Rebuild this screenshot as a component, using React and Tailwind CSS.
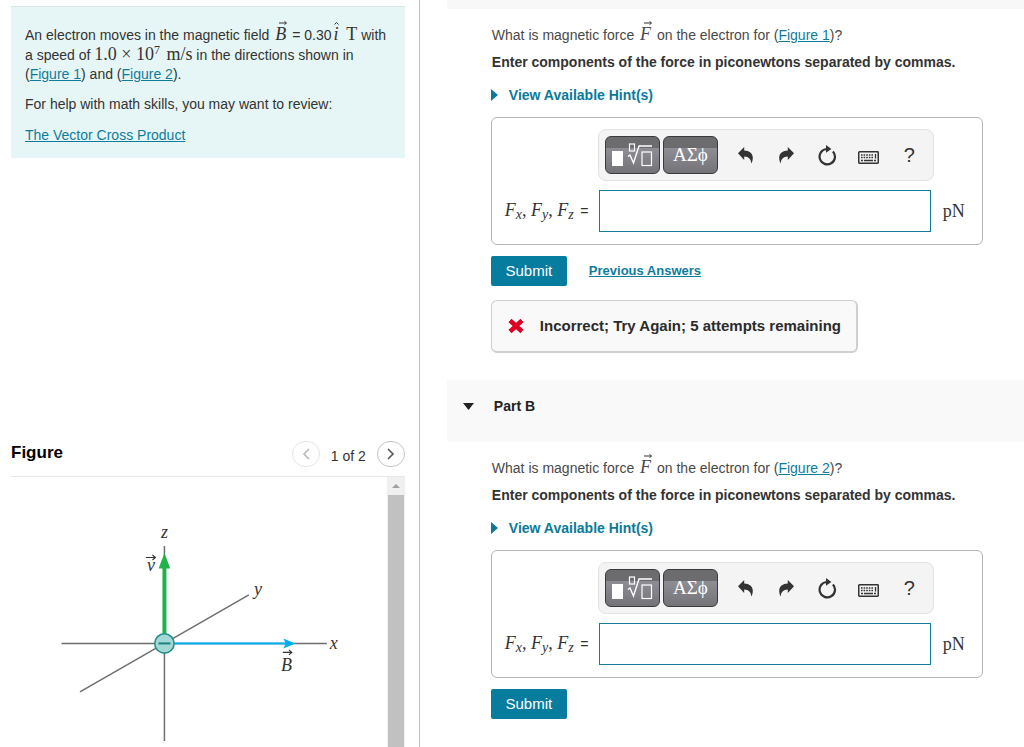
import React from 'react'

const sans = "font-['Liberation_Sans',Arial,sans-serif]"
const serif = "font-['Liberation_Serif','Times_New_Roman',serif]"

function VectorSymbol({ children, accent = 'arrow' }) {
  return (
    <span className={`${serif} relative mx-0.5 inline-block text-lg leading-none italic`}>
      {children}
      <svg className="absolute -top-1 left-1 h-1.5 w-2 overflow-visible" viewBox="0 0 8 6" aria-hidden="true">
        {accent === 'arrow' ? (
          <path d="M0 2h7M5.500 .4 7.600 2 5.500 3.600" fill="none" stroke="#333" strokeWidth="1" />
        ) : (
          <path d="M-2.500 3.500 -.5 1.500 1.500 3.500" fill="none" stroke="#333" strokeWidth="1" />
        )}
      </svg>
    </span>
  )
}

function Link({ children }) {
  return (
    <a href="#figure" className="text-[#0f7c9c] underline">
      {children}
    </a>
  )
}

function TemplateIcon() {
  return (
    <svg width="42" height="24" viewBox="0 0 42 24" fill="none" stroke="#fff" aria-hidden="true">
      <rect x="1" y="8" width="11" height="15" fill="#fff" stroke="none" />
      <rect x="18.500" y="1" width="5" height="7" strokeWidth="1.200" />
      <path d="M17 13.500 19 12l3.500 8L28 3h13" strokeWidth="1.400" />
      <rect x="31" y="9" width="9.500" height="13.500" strokeWidth="1.200" />
    </svg>
  )
}

function UndoIcon() {
  return (
    <svg width="15" height="17" viewBox="0 0 15 17" fill="#333" aria-hidden="true">
      <path d="M0 6.200 6.200 0v3.400c5 .2 8.600 2.700 8.600 7.300 0 2-.5 4-1.500 5.800-.3-4.200-2.300-6.700-7.100-6.900v3.300z" />
    </svg>
  )
}

function RedoIcon() {
  return (
    <svg width="15" height="17" viewBox="0 0 15 17" fill="#333" aria-hidden="true">
      <path d="M15 6.200 8.800 0v3.400C3.800 3.600.2 6.100.2 10.700c0 2 .5 4 1.500 5.800.3-4.200 2.300-6.700 7.100-6.900v3.300z" />
    </svg>
  )
}

function ResetIcon() {
  return (
    <svg width="20" height="21" viewBox="0 0 20 21" fill="none" aria-hidden="true">
      <path d="M15.900 6.400A7.700 7.700 0 1 1 9.600 4" stroke="#333" strokeWidth="2.200" />
      <path d="M9 0 14.400 3.900 9 7.800z" fill="#333" />
    </svg>
  )
}

function KeyboardIcon() {
  return (
    <svg width="21" height="13" viewBox="0 0 21 13" fill="none" stroke="#333" aria-hidden="true">
      <rect x=".75" y=".75" width="19.500" height="11.500" rx=".7" strokeWidth="1.500" />
      <path d="M3 4h13M3 6.500h13" strokeWidth="1.300" strokeDasharray="1.600 1" />
      <path d="M3 9.500h2M6 9.500h9M16 9.500h2M17.500 3v4.500" strokeWidth="1.300" />
    </svg>
  )
}

const toolButton = 'flex h-8 w-[41px] items-center justify-center'
const padButton =
  'flex h-[38px] w-[55px] items-center justify-center rounded-md border border-[#3a3a3c] bg-linear-to-b from-[#6c6c6e] from-30% via-[#8f8e96] via-30% to-[#737377] text-white'

function AnswerBox({ id }) {
  return (
    <div className="mt-3 grid max-w-[492px] grid-cols-[94px_minmax(0,1fr)_36px] items-center rounded-md border border-[#b5b5b5] px-3 pt-[11px] pb-3 text-[#333]">
      <div className="col-start-2 row-start-1 flex h-[52px] items-center rounded-lg border border-[#e2e2e2] bg-[#f4f4f4] pl-1.5">
        <button type="button" aria-label="Templates" className={padButton}>
          <TemplateIcon />
        </button>
        <button type="button" aria-label="Symbols" className={`${padButton} ${serif} ml-[3px] text-[19px] leading-6`}>
          ΑΣϕ
        </button>
        <div className="ml-[7px] flex items-center">
          <button type="button" aria-label="Undo" className={toolButton}><UndoIcon /></button>
          <button type="button" aria-label="Redo" className={toolButton}><RedoIcon /></button>
          <button type="button" aria-label="Reset" className={toolButton}><ResetIcon /></button>
          <button type="button" aria-label="Keyboard shortcuts" className={`${toolButton} pt-1`}><KeyboardIcon /></button>
          <button type="button" aria-label="Help" className={`${toolButton} text-xl`}>?</button>
        </div>
      </div>
      <label htmlFor={id} className={`${serif} col-start-1 row-start-2 mt-1.5 pl-px text-lg leading-6 whitespace-nowrap`}>
        <i>F</i><sub className="text-sm italic">x</sub>, <i>F</i><sub className="text-sm italic">y</sub>, <i>F</i>
        <sub className="text-sm italic">z</sub> <span className={`${sans} ml-0.5 text-sm`}>=</span>
      </label>
      <input
        id={id}
        type="text"
        className="col-start-2 row-start-2 mt-[9px] mr-[3px] ml-px h-[42px] border border-[#147b9b] bg-white px-2 outline-none"
      />
      <span className={`${serif} col-start-3 row-start-2 mt-2 pl-[9px] text-lg leading-6`}>pN</span>
    </div>
  )
}

function Question({ id, figure, children }) {
  return (
    <section className="pt-4 pr-10 pl-11">
      <p className="pl-px text-sm leading-5 text-[#494949]">
        What is magnetic force <VectorSymbol>F</VectorSymbol> on the electron for (<Link>{figure}</Link>)?
      </p>
      <p className="mt-[7px] pl-px text-sm leading-5 font-bold text-[#333]">
        Enter components of the force in piconewtons separated by commas.
      </p>
      <button type="button" className="mt-[13px] flex items-center text-sm leading-5 font-bold text-[#0a7a9b]">
        <svg width="7" height="12" viewBox="0 0 7 12" fill="#0a7a9b" aria-hidden="true">
          <path d="M0 0 7 6 0 12z" />
        </svg>
        <span className="ml-[11px]">View Available Hint(s)</span>
      </button>
      <AnswerBox id={id} />
      <div className="mt-[11px] flex items-center">
        <button type="button" className="h-[30px] w-19 rounded-xs bg-[#067c9e] text-[15px] font-medium text-white">
          Submit
        </button>
        {children}
      </div>
    </section>
  )
}

function AxesDiagram() {
  return (
    <svg
      className={`${serif} w-full max-w-[376px]`}
      viewBox="0 0 376 270"
      role="img"
      aria-label="Electron at the origin with velocity along z and field along x"
    >
      <g stroke="#6d6e70" strokeWidth="1.500">
        <path d="M50.500 166.500H316M153.500 69v195M69 215 238 118" />
      </g>
      <path d="M153.500 157V90" stroke="#22b24c" strokeWidth="4" />
      <path d="M153.500 76 159.300 91.500h-11.600z" fill="#22b24c" />
      <path d="M163 166.500h115" stroke="#00aeef" strokeWidth="2" />
      <path d="M284.500 166.500 272.500 161.500 275 166.500 272.500 171.500z" fill="#00aeef" />
      <circle cx="153.500" cy="166.500" r="9.700" fill="#a3d9d4" stroke="#268f8b" strokeWidth="1.600" />
      <path d="M147.500 166.500h12" stroke="#17847f" strokeWidth="2" />
      <g fill="#333" fontSize="18" fontStyle="italic">
        <text x="150" y="61">z</text>
        <text x="243" y="118">y</text>
        <text x="319" y="172">x</text>
        <text x="136" y="94">v</text>
        <text x="270" y="194">B</text>
      </g>
      <g stroke="#333" fill="none" strokeWidth="1.100">
        <path d="M135 80.500h9M141.500 78l3 2.500-3 2.500M272 175.500h8.500M278 173l3 2.500-3 2.500" />
      </g>
    </svg>
  )
}

function LeftPane() {
  return (
    <aside className="flex h-screen w-[41%] shrink-0 flex-col justify-between border-r border-[#b3c5d9] pt-1.5 pr-3.5 pl-[11px]">
      <section className="border-t border-[#d8e6e6] bg-[#e6f6f6] px-3.5 pt-[18px] pb-[13px] text-sm leading-[19px] text-[#333]">
        <p>
          An electron moves in the magnetic field <VectorSymbol>B</VectorSymbol> = 0.30
          <VectorSymbol accent="hat">i</VectorSymbol>{' '}
          <span className={`${serif} ml-0.5 text-lg leading-none`}>T</span> with a speed of{' '}
          <span className={`${serif} text-lg leading-none`}>
            1.0 × 10<sup className="mr-0.5 text-xs leading-none">7</sup> m/s
          </span>{' '}
          in the directions shown in{' '}
          <span className="whitespace-nowrap">(<Link>Figure 1</Link>)</span> and{' '}
          <span className="whitespace-nowrap">(<Link>Figure 2</Link>).</span>
        </p>
        <p className="mt-[11px]">For help with math skills, you may want to review:</p>
        <p className="mt-3"><Link>The Vector Cross Product</Link></p>
      </section>

      <section id="figure" className="h-[306px]">
        <header className="flex h-9 items-start justify-between border-b border-[#e8e8e8]">
          <h2 className="text-[17px] leading-6 font-bold text-black">Figure</h2>
          <div className="flex items-center text-sm text-[#333]">
            <button type="button" disabled aria-label="Previous figure" className="flex h-[26px] w-7 items-center justify-center rounded-full border border-[#e6e6e6]">
              <svg width="8" height="12" viewBox="0 0 8 12" fill="none" stroke="#b8b8b8" strokeWidth="1.600" aria-hidden="true"><path d="M7 1 2 6l5 5" /></svg>
            </button>
            <span className="mx-[11px] pt-1">1 of 2</span>
            <button type="button" aria-label="Next figure" className="flex h-[26px] w-7 items-center justify-center rounded-full border border-[#c4c4c4]">
              <svg width="8" height="12" viewBox="0 0 8 12" fill="none" stroke="#555" strokeWidth="1.600" aria-hidden="true"><path d="M1 1l5 5-5 5" /></svg>
            </button>
          </div>
        </header>
        <div className="flex h-[270px]">
          <div className="min-w-0 flex-1"><AxesDiagram /></div>
          <div className="flex w-[18px] flex-col bg-[#f0f0f0] px-px" aria-hidden="true">
            <div className="flex h-[18px] shrink-0 items-center justify-center">
              <svg width="8" height="4" viewBox="0 0 8 4" fill="#a0a0a0"><path d="M0 4 4 0l4 4z" /></svg>
            </div>
            <div className="flex-1 bg-[#c1c1c1]" />
          </div>
        </div>
      </section>
    </aside>
  )
}

export default function App() {
  return (
    <div className={`${sans} flex min-h-screen bg-white`}>
      <LeftPane />
      <main className="ml-[27px] min-w-0 flex-1">
        <div className="h-[9px] bg-[#f8f8f8]" />
        <Question id="answer-a" figure="Figure 1">
          <a href="#previous" className="ml-[22px] text-[13px] font-bold text-[#0f7c9c] underline">Previous Answers</a>
        </Question>
        <div className="mt-3.5 pl-11">
          <div className="flex h-[53px] w-fit items-center rounded-md border border-r-2 border-b-2 border-[#cfcfcf] bg-[#f9f9f9] px-[15px] text-[15px] font-bold text-[#2b2b2b]">
            <svg width="18" height="16" viewBox="0 0 18 16" fill="none" stroke="#e00024" strokeWidth="4.500" aria-hidden="true"><path d="M3 2.500 15 13.500M15 2.500 3 13.500" /></svg>
            <span className="ml-[15px]">Incorrect; Try Again; 5 attempts remaining</span>
          </div>
        </div>
        <h2 className="mt-[27px] h-[62px] bg-[#f9f9f9] text-sm font-bold text-[#222]">
          <button type="button" className="flex h-[52px] items-center pl-4">
            <svg width="11" height="7" viewBox="0 0 11 7" fill="#222" aria-hidden="true"><path d="M0 0h11L5.500 7z" /></svg>
            <span className="ml-5">Part B</span>
          </button>
        </h2>
        <Question id="answer-b" figure="Figure 2" />
      </main>
    </div>
  )
}
